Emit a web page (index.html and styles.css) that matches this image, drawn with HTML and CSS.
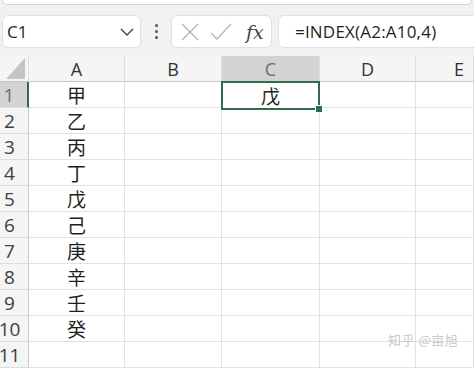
FILE: index.html
```html
<!DOCTYPE html>
<html lang="zh-CN">
<head>
    <meta charset="UTF-8">
    <meta name="viewport" content="width=device-width, initial-scale=1.0">
    <title>INDEX</title>
    <link rel="stylesheet" href="styles.css">
</head>
<body>
    <div class="toolbar">
        <div class="ribbon"></div>
        <div class="formula-row">
            <div class="name-box">
                <span>C1</span>
                <svg class="chevron" width="14" height="8" viewBox="0 0 14 8"><path d="M1 1 L7 7 L13 1" fill="none" stroke="#444" stroke-width="1.4"/></svg>
            </div>
            <div class="dots"><i></i><i></i><i></i></div>
            <div class="fx-buttons">
                <svg width="20" height="20" viewBox="0 0 20 20"><path d="M2 2 L18 18 M18 2 L2 18" stroke="#b5b5b5" stroke-width="1.4"/></svg>
                <svg width="22" height="20" viewBox="0 0 22 20"><path d="M1 11 L7 17 L21 2" fill="none" stroke="#b5b5b5" stroke-width="1.4"/></svg>
                <span class="fx">fx</span>
            </div>
            <div class="formula-input">=INDEX(A2:A10,4)</div>
        </div>
    </div>

    <div class="sheet">
        <div class="corner">
            <svg width="19" height="21" viewBox="0 0 19 21"><polygon points="19,0 19,21 0,21" fill="#c4c4c4"/></svg>
        </div>
        <div class="col-head">A</div>
        <div class="col-head">B</div>
        <div class="col-head active">C</div>
        <div class="col-head">D</div>
        <div class="col-head">E</div>
    </div>
    <div class="sheet" id="rows"></div>

    <div class="watermark">知乎 @亩旭</div>

    <script>
        const stems = ['甲', '乙', '丙', '丁', '戊', '己', '庚', '辛', '壬', '癸', ''];
        const rows = document.getElementById('rows');
        stems.forEach((stem, i) => {
            const n = i + 1;
            let html = `<div class="row-head${n === 1 ? ' active' : ''}">${n}</div>`;
            html += `<div class="cell">${stem}</div>`;
            html += `<div class="cell"></div>`;
            html += n === 1 ? `<div class="cell selected">戊<span class="handle"></span></div>` : `<div class="cell"></div>`;
            html += `<div class="cell"></div><div class="cell"></div>`;
            rows.insertAdjacentHTML('beforeend', html);
        });
    </script>
</body>
</html>
```

FILE: styles.css
```css
body {
    margin: 0;
    width: 474px;
    height: 370px;
    overflow: hidden;
    background-color: #ffffff;
    font-family: "Open Sans", "Noto Sans CJK SC", sans-serif;
    color: #262626;
    position: relative;
}

.toolbar {
    background-color: #f1f1f1;
    height: 56px;
}

.ribbon {
    height: 4px;
    margin: 0 2px;
    background-color: #ffffff;
    border: 1px solid #d4d4d4;
    border-top: none;
    border-radius: 0 0 7px 7px;
}

.formula-row {
    display: flex;
    align-items: center;
    margin-top: 10px;
    height: 33px;
    padding-left: 2px;
}

.name-box,
.fx-buttons,
.formula-input {
    height: 33px;
    box-sizing: border-box;
    background-color: #ffffff;
    border: 1px solid #e0e0e0;
    border-radius: 6px;
    display: flex;
    align-items: center;
}

.name-box {
    width: 139px;
    padding: 0 6px 0 4px;
    justify-content: space-between;
    font-size: 17px;
}

.dots {
    width: 30px;
    display: flex;
    flex-direction: column;
    align-items: center;
    gap: 3px;
}

.dots i {
    width: 3px;
    height: 3px;
    border-radius: 50%;
    background-color: #555;
}

.fx-buttons {
    width: 101px;
    padding: 0 6px 0 8px;
    gap: 10px;
}

.fx {
    font-family: "DejaVu Serif", "Liberation Serif", serif;
    font-style: italic;
    font-size: 19px;
    color: #444;
    margin-left: 4px;
}

.formula-input {
    flex: 1;
    margin-left: 6px;
    margin-right: -10px;
    padding-left: 16px;
    font-size: 17px;
    letter-spacing: 0.2px;
    color: #1f1f1f;
}

.sheet {
    display: grid;
    grid-template-columns: 29px 96px 97px 98px 96px 1fr;
    grid-auto-rows: 26px;
}

.corner,
.col-head,
.row-head {
    background-color: #f5f5f5;
    box-sizing: border-box;
    border-right: 1px solid #dedede;
    border-bottom: 1px solid #c8c8c8;
}

.corner {
    display: flex;
    align-items: flex-end;
    justify-content: flex-end;
    padding: 0 3px 2px 0;
}

.col-head {
    display: flex;
    align-items: center;
    justify-content: center;
    font-size: 18px;
    color: #333;
}

.col-head:nth-child(6) {
    justify-content: flex-start;
    padding-left: 38px;
}

.col-head.active {
    background-color: #d3d3d3;
    color: #5d7768;
}

.row-head {
    border-bottom: 1px solid #dedede;
    border-right: 1px solid #c8c8c8;
    font-size: 19px;
    color: #404040;
    display: flex;
    align-items: center;
    justify-content: center;
    padding-right: 9px;
}

.row-head.active {
    background-color: #d3d3d3;
    color: #5d7768;
    border-right: 2px solid #2f6b4f;
}

.cell {
    box-sizing: border-box;
    border-right: 1px solid #e1e1e1;
    border-bottom: 1px solid #e1e1e1;
    display: flex;
    align-items: center;
    justify-content: center;
    font-family: "Noto Sans CJK SC", sans-serif;
    font-size: 19px;
    color: #1f1f1f;
}

.cell.selected {
    position: relative;
    border: 2px solid #2f6b4f;
    margin: -1px 0 -2px -1px;
}

.handle {
    position: absolute;
    right: -5px;
    bottom: -5px;
    width: 6px;
    height: 6px;
    background-color: #2f6b4f;
    border: 1px solid #ffffff;
}

.watermark {
    position: absolute;
    left: 388px;
    top: 330px;
    font-family: "Noto Sans CJK SC", sans-serif;
    font-size: 13px;
    color: #c9c9c9;
    letter-spacing: 0.5px;
}
```
